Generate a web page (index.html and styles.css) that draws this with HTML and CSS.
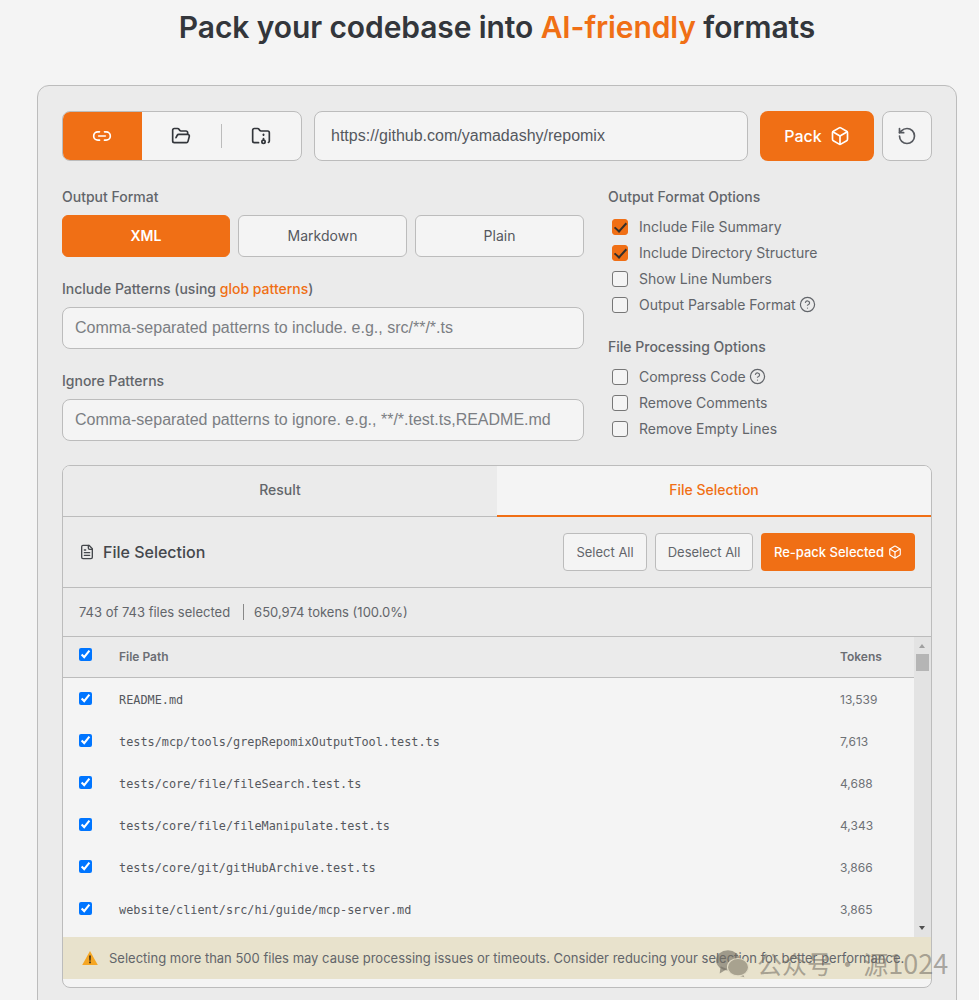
FILE: index.html
```html
<!DOCTYPE html>
<html lang="en">
<head>
  <meta charset="UTF-8" />
  <meta name="viewport" content="width=device-width, initial-scale=1.0"/>
  <title>Repomix</title>
  <link rel="stylesheet" href="styles.css">
</head>
<body>
  <svg class="sprites" aria-hidden="true">
    <symbol id="i-link" viewBox="0 0 24 24"><path d="M9 17H7A5 5 0 0 1 7 7h2"/><path d="M15 7h2a5 5 0 1 1 0 10h-2"/><path d="M8 12h8"/></symbol>
    <symbol id="i-folder" viewBox="0 0 24 24"><path d="m6 14 1.5-2.9A2 2 0 0 1 9.24 10H20a2 2 0 0 1 1.94 2.5l-1.54 6a2 2 0 0 1-1.95 1.5H4a2 2 0 0 1-2-2V5a2 2 0 0 1 2-2h3.9a2 2 0 0 1 1.69.9l.81 1.2a2 2 0 0 0 1.67.9H18a2 2 0 0 1 2 2v2"/></symbol>
    <symbol id="i-archive" viewBox="0 0 24 24"><circle cx="15" cy="19" r="2"/><path d="M20.9 19.8A2 2 0 0 0 22 18V8a2 2 0 0 0-2-2h-7.9a2 2 0 0 1-1.69-.9L9.6 3.9A2 2 0 0 0 7.93 3H4a2 2 0 0 0-2 2v13a2 2 0 0 0 2 2h5.1"/><path d="M15 11v-1"/><path d="M15 17v-2"/></symbol>
    <symbol id="i-box" viewBox="0 0 24 24"><path d="M21 8a2 2 0 0 0-1-1.73l-7-4a2 2 0 0 0-2 0l-7 4A2 2 0 0 0 3 8v8a2 2 0 0 0 1 1.73l7 4a2 2 0 0 0 2 0l7-4A2 2 0 0 0 21 16Z"/><path d="m3.3 7 8.7 5 8.7-5"/><path d="M12 22V12"/></symbol>
    <symbol id="i-reset" viewBox="0 0 24 24"><path d="M3 12a9 9 0 1 0 9-9 9.75 9.75 0 0 0-6.74 2.74L3 8"/><path d="M3 3v5h5"/></symbol>
    <symbol id="i-file" viewBox="0 0 24 24"><path d="M15 2H6a2 2 0 0 0-2 2v16a2 2 0 0 0 2 2h12a2 2 0 0 0 2-2V7Z"/><path d="M14 2v4a2 2 0 0 0 2 2h4"/><path d="M10 9H8"/><path d="M16 13H8"/><path d="M16 17H8"/></symbol>
    <symbol id="i-help" viewBox="0 0 24 24"><circle cx="12" cy="12" r="10"/><path d="M9.09 9a3 3 0 0 1 5.83 1c0 2-3 3-3 3"/><path d="M12 17h.01"/></symbol>
  </svg>

  <h1 class="title">Pack your codebase into <span class="accent">AI-friendly</span> formats</h1>

  <main class="card">
    <div class="top-row">
      <div class="modes">
        <button class="mode active"><svg class="icon icon-20"><use href="#i-link"/></svg></button>
        <button class="mode"><svg class="icon icon-20"><use href="#i-folder"/></svg></button>
        <span class="mode-sep"></span>
        <button class="mode"><svg class="icon icon-20"><use href="#i-archive"/></svg></button>
      </div>
      <input class="field url" type="text" value="https://github.com/yamadashy/repomix" />
      <button class="btn-primary pack">Pack <svg class="icon icon-20"><use href="#i-box"/></svg></button>
      <button class="reset"><svg class="icon icon-20"><use href="#i-reset"/></svg></button>
    </div>

    <div class="options">
      <div class="col-left">
        <div class="label">Output Format</div>
        <div class="formats">
          <button class="format active">XML</button>
          <button class="format">Markdown</button>
          <button class="format">Plain</button>
        </div>
        <div class="label label-gap">Include Patterns (using <a class="accent" href="#">glob patterns</a>)</div>
        <input class="field pattern" type="text" placeholder="Comma-separated patterns to include. e.g., src/**/*.ts" />
        <div class="label label-gap">Ignore Patterns</div>
        <input class="field pattern" type="text" placeholder="Comma-separated patterns to ignore. e.g., **/*.test.ts,README.md" />
      </div>
      <div class="col-right">
        <div class="label">Output Format Options</div>
        <ul class="checks">
          <li><input class="check" type="checkbox" checked /> Include File Summary</li>
          <li><input class="check" type="checkbox" checked /> Include Directory Structure</li>
          <li><input class="check" type="checkbox" /> Show Line Numbers</li>
          <li><input class="check" type="checkbox" /> Output Parsable Format <svg class="icon help"><use href="#i-help"/></svg></li>
        </ul>
        <div class="label group-gap">File Processing Options</div>
        <ul class="checks">
          <li><input class="check" type="checkbox" /> Compress Code <svg class="icon help"><use href="#i-help"/></svg></li>
          <li><input class="check" type="checkbox" /> Remove Comments</li>
          <li><input class="check" type="checkbox" /> Remove Empty Lines</li>
        </ul>
      </div>
    </div>

    <section class="panel">
      <div class="tabs">
        <div class="tab">Result</div>
        <div class="tab active">File Selection</div>
      </div>
      <div class="panel-head">
        <div class="panel-title"><svg class="icon icon-16"><use href="#i-file"/></svg> File Selection</div>
        <div class="panel-actions">
          <button class="btn-small">Select All</button>
          <button class="btn-small btn-tight">Deselect All</button>
          <button class="btn-primary repack">Re-pack Selected <svg class="icon icon-14"><use href="#i-box"/></svg></button>
        </div>
      </div>
      <div class="stats"><span>743 of 743 files selected</span><span class="stats-sep"></span><span>650,974 tokens (100.0%)</span></div>
      <div class="list">
        <div class="list-scroll">
          <table class="files">
            <thead>
              <tr><th class="c-check"><input type="checkbox" checked /></th><th>File Path</th><th class="c-tokens">Tokens</th></tr>
            </thead>
            <tbody>
              <tr><td class="c-check"><input type="checkbox" checked /></td><td class="path">README.md</td><td class="c-tokens">13,539</td></tr>
              <tr><td class="c-check"><input type="checkbox" checked /></td><td class="path">tests/mcp/tools/grepRepomixOutputTool.test.ts</td><td class="c-tokens">7,613</td></tr>
              <tr><td class="c-check"><input type="checkbox" checked /></td><td class="path">tests/core/file/fileSearch.test.ts</td><td class="c-tokens">4,688</td></tr>
              <tr><td class="c-check"><input type="checkbox" checked /></td><td class="path">tests/core/file/fileManipulate.test.ts</td><td class="c-tokens">4,343</td></tr>
              <tr><td class="c-check"><input type="checkbox" checked /></td><td class="path">tests/core/git/gitHubArchive.test.ts</td><td class="c-tokens">3,866</td></tr>
              <tr><td class="c-check"><input type="checkbox" checked /></td><td class="path">website/client/src/hi/guide/mcp-server.md</td><td class="c-tokens">3,865</td></tr>
            </tbody>
          </table>
        </div>
        <div class="scrollbar">
          <span class="arrow up"></span>
          <span class="thumb"></span>
          <span class="arrow down"></span>
        </div>
      </div>
      <div class="warning">
        <svg class="warn-icon" viewBox="0 0 16 16"><path class="warn-bg" d="M8 1 15.8 15H.2Z"/><path class="warn-mark" d="M7.2 5.6h1.6l-.2 5.2H7.4ZM7.2 11.6h1.6v1.6H7.2Z"/></svg>
        Selecting more than 500 files may cause processing issues or timeouts. Consider reducing your selection for better performance.
      </div>
    </section>
  </main>

  <!-- watermark sits over the warning bar -->
  <div class="watermark">
    <svg class="wm-logo" viewBox="0 0 36 30"><ellipse cx="13" cy="11.5" rx="13" ry="11"/><path d="M5 18 4 26l8-5Z"/><path class="wm-tail" d="M29 26l2 4-7-2Z"/><ellipse class="wm-front" cx="24" cy="19" rx="11.5" ry="9.5"/></svg>
    <span class="wm-text">公众号 · 源<span class="wm-num">1024</span></span>
  </div>
</body>
</html>
```

FILE: styles.css
```css
:root {
  --orange: #f06f15;
  --page: #f4f4f4;
  --card: #ebebeb;
  --line: #bcbcbc;
  --text: #55585e;
}

* {
  box-sizing: border-box;
}

html, body {
  height: 1000px;
  overflow: hidden;
}

body {
  margin: 0;
  position: relative;
  background-color: var(--page);
  color: var(--text);
  font-family: Inter, 'Liberation Sans', sans-serif;
  font-size: 14px;
}

button, input {
  font-family: inherit;
}

.sprites {
  display: none;
}

.icon {
  fill: none;
  stroke: currentColor;
  stroke-width: 2;
  stroke-linecap: round;
  stroke-linejoin: round;
  flex: none;
}

.icon-20 { width: 20px; height: 20px; }
.icon-16 { width: 16px; height: 16px; }
.icon-14 { width: 14px; height: 14px; }

.accent {
  color: var(--orange);
  text-decoration: none;
}

.title {
  width: 920px;
  margin: 0 0 0 37px;
  height: 85px;
  padding-top: 8px;
  text-align: center;
  font-size: 30px;
  line-height: 38px;
  font-weight: 600;
  letter-spacing: -0.1px;
  color: #33363b;
}

.card {
  width: 920px;
  margin-left: 37px;
  padding: 25px 24px 24px;
  background-color: var(--card);
  border: 1px solid var(--line);
  border-radius: 12px;
}

/* top row */
.top-row {
  display: flex;
  gap: 12px;
  height: 50px;
}

.modes {
  display: flex;
  align-items: center;
  width: 240px;
  background-color: var(--page);
  border: 1px solid var(--line);
  border-radius: 8px;
  overflow: hidden;
}

.mode {
  flex: 1;
  height: 100%;
  display: flex;
  align-items: center;
  justify-content: center;
  border: none;
  background: none;
  color: #33363b;
  padding: 0 1px 0 0;
}

.mode.active {
  background-color: var(--orange);
  color: #fff;
}

.mode-sep {
  width: 1px;
  height: 24px;
  background-color: var(--line);
}

.field {
  display: block;
  width: 100%;
  background-color: var(--page);
  border: 1px solid var(--line);
  border-radius: 8px;
  color: var(--text);
  font-size: 16px;
  font-family: 'Liberation Sans', sans-serif;
  outline: none;
}

.field::placeholder {
  color: #7b7e83;
  opacity: 1;
}

.url {
  flex: 1;
  padding: 0 16px;
}

.btn-primary {
  display: flex;
  align-items: center;
  justify-content: center;
  background-color: var(--orange);
  border: none;
  border-radius: 8px;
  color: #fff;
  font-weight: 500;
}

.pack {
  width: 114px;
  gap: 8px;
  font-size: 16px;
  margin-right: -4px;
}

.reset {
  width: 50px;
  display: flex;
  align-items: center;
  justify-content: center;
  background-color: var(--page);
  border: 1px solid var(--line);
  border-radius: 8px;
  color: var(--text);
  padding: 0;
}

/* options */
.options {
  display: grid;
  grid-template-columns: 522px 324px;
  gap: 24px;
  margin-top: 28px;
  height: 276px;
}

.label {
  height: 16px;
  line-height: 16px;
  font-weight: 500;
  font-size: 14px;
  color: #62656a;
}

.label-gap {
  margin-top: 24px;
  margin-bottom: 10px;
}

.formats {
  display: grid;
  grid-template-columns: 168px 169px 169px;
  gap: 8px;
  margin-top: 10px;
}

.format {
  height: 42px;
  padding: 0 0 2px;
  background-color: var(--page);
  border: 1px solid var(--line);
  border-radius: 6px;
  color: var(--text);
  font-size: 14px;
}

.format.active {
  background-color: var(--orange);
  border-color: var(--orange);
  color: #fff;
  font-weight: 600;
}

.pattern {
  height: 42px;
  padding: 0 12px;
}

.checks {
  list-style: none;
  margin: 9px 0 0;
  padding: 0 0 0 4px;
}

.checks li {
  display: flex;
  align-items: center;
  gap: 11px;
  height: 26px;
  padding-bottom: 2px;
  font-size: 14px;
  color: #62656a;
}

.check {
  appearance: none;
  position: relative;
  width: 16px;
  height: 16px;
  margin: 2px 0 0;
  flex: none;
  background-color: var(--page);
  border: 1px solid #777;
  border-radius: 3px;
}

.check:checked {
  background-color: var(--orange);
  border-color: var(--orange);
}

.check:checked::before {
  content: "";
  position: absolute;
  left: 4px;
  top: 0;
  width: 5px;
  height: 10px;
  border: solid #33302c;
  border-width: 0 2px 2px 0;
  transform: rotate(42deg);
}

.help {
  width: 17px;
  height: 17px;
  stroke-width: 1.7;
  margin-left: -8px;
}

.group-gap {
  margin-top: 21px;
}

/* file panel */
.panel {
  background-color: var(--page);
  border: 1px solid var(--line);
  border-radius: 8px;
  height: 523px;
  overflow: hidden;
}

.tabs {
  display: grid;
  grid-template-columns: 434px 1fr;
  height: 51px;
  border-bottom: 1px solid var(--line);
}

.tab {
  display: flex;
  align-items: center;
  justify-content: center;
  padding-bottom: 4px;
  background-color: var(--card);
  font-weight: 500;
  font-size: 14px;
  color: #62656a;
}

.tab.active {
  background-color: var(--page);
  color: var(--orange);
  padding-bottom: 2px;
  border-bottom: 2px solid var(--orange);
  margin-bottom: -1px;
}

.panel-head {
  display: flex;
  align-items: center;
  justify-content: space-between;
  height: 71px;
  padding: 0 16px;
  background-color: var(--card);
  border-bottom: 1px solid var(--line);
}

.panel-title {
  display: flex;
  align-items: center;
  gap: 8px;
  font-size: 16px;
  font-weight: 500;
  color: #44474c;
}

.panel-actions {
  display: flex;
  gap: 8px;
}

.btn-small {
  height: 38px;
  padding: 0 12.5px;
  background-color: var(--page);
  border: 1px solid var(--line);
  border-radius: 4px;
  color: #62656a;
  font-size: 13px;
}

.btn-tight {
  padding: 0 11.5px;
}

.repack {
  height: 38px;
  padding: 0 13px;
  gap: 4px;
  font-size: 13px;
  border-radius: 4px;
}

.stats {
  display: flex;
  align-items: center;
  height: 49px;
  padding: 0 16px;
  background-color: var(--card);
  border-bottom: 1px solid var(--line);
  font-size: 13px;
  color: #62656a;
}

.stats-sep {
  width: 1px;
  height: 16px;
  margin: 0 10px 0 13px;
  background-color: #888;
}

.list {
  display: flex;
  height: 300px;
}

.list-scroll {
  flex: 1;
  overflow: hidden;
}

.files {
  width: 100%;
  border-collapse: separate;
  border-spacing: 0;
  table-layout: fixed;
}

.files th {
  height: 41px;
  padding: 0 0 2px;
  text-align: left;
  background-color: var(--card);
  border-bottom: 1px solid var(--line);
  font-size: 12px;
  font-weight: 600;
  color: #6b6e74;
}

.files td {
  height: 42px;
  padding: 0;
  font-size: 12px;
  color: #6e7176;
}

.files td.path {
  padding-top: 1px;
  font-family: 'DejaVu Sans Mono', monospace;
  font-size: 11.85px;
  color: #55585e;
}

.c-check {
  width: 56px;
  padding-left: 16px !important;
}

.c-check input {
  display: block;
  width: 13px;
  height: 13px;
  margin: -2px 0 0;
}

.files th.c-check input {
  margin-top: -3px;
}

.c-tokens {
  width: 74px;
}

.scrollbar {
  position: relative;
  width: 17px;
  background-color: #e3e3e3;
}

.thumb {
  position: absolute;
  top: 17px;
  left: 2px;
  width: 13px;
  height: 17px;
  background-color: #b5b5b5;
}

.arrow {
  position: absolute;
  left: 5px;
  width: 0;
  height: 0;
  border-left: 3.5px solid transparent;
  border-right: 3.5px solid transparent;
}

.arrow.up {
  top: 7px;
  border-bottom: 4px solid #a0a0a0;
}

.arrow.down {
  bottom: 7px;
  border-top: 4px solid #505050;
}

.warning {
  display: flex;
  align-items: center;
  gap: 11px;
  height: 42px;
  padding: 0 19px;
  background-color: #e8e2cc;
  font-size: 13px;
  white-space: nowrap;
  color: #62656a;
}

.warn-icon {
  width: 16px;
  height: 16px;
  flex: none;
}

.warn-bg { fill: #f5a623; }
.warn-mark { fill: #2b2215; }

/* watermark */
.watermark {
  position: absolute;
  left: 716px;
  top: 946px;
  display: flex;
  align-items: center;
  gap: 8px;
  font-family: 'Noto Sans CJK SC', 'Noto Sans', sans-serif;
  font-size: 25px;
  line-height: 34px;
  color: rgba(110, 105, 95, 0.55);
  white-space: nowrap;
}

.wm-text {
  word-spacing: -2.5px;
}

.wm-num {
  font-size: 27px;
}

.wm-logo {
  width: 33px;
  height: 29px;
  fill: rgba(115, 110, 98, 0.62);
}

.wm-front {
  fill: #a8a28f;
  stroke: #e2dcc6;
  stroke-width: 1.2;
}

.wm-tail {
  fill: #a8a28f;
}
```
